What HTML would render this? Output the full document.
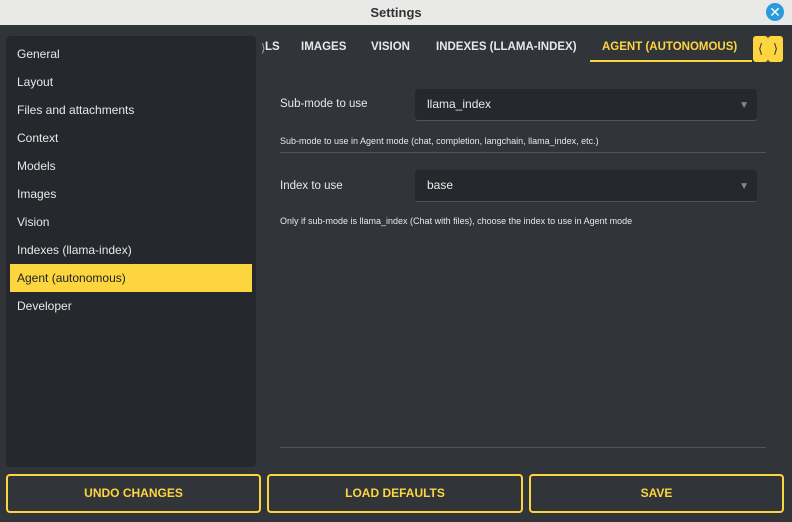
<!DOCTYPE html>
<html><head><style>
*{margin:0;padding:0;box-sizing:border-box}
body{width:792px;height:522px;background:#31353a;font-family:"Liberation Sans",sans-serif;position:relative;overflow:hidden;color:#e8e8e8}
.title{position:absolute;left:0;top:0;width:792px;height:25px;background:#e9e9e8;text-align:center;font-weight:bold;font-size:13px;line-height:25px;color:#333}
.close{position:absolute;right:8px;top:3px;width:18px;height:18px;border-radius:50%;background:#2a9bdc;color:#fff;font-size:14px;line-height:18px;text-align:center}
.left{position:absolute;left:6px;top:36px;width:250px;height:431px;background:#25282c;border-radius:4px}
.item{position:absolute;left:4px;width:242px;height:28px;font-size:12px;line-height:28px;padding-left:7px;color:#e8e8e8}
.sel{background:#fdd53f;color:#222}
.tab{position:absolute;top:41px;font-size:11.5px;font-weight:bold;color:#e8e8e8}
.lbl{position:absolute;font-size:11.5px;color:#e8e8e8}
.combo{position:absolute;left:415px;width:342px;height:32px;background:#25282c;border-radius:3px;border-bottom:1px solid #555;font-size:12px;line-height:30px;padding-left:12px}
.combo span{position:absolute;right:8px;top:2px;color:#888;font-size:10px}
.small{position:absolute;left:280px;font-size:9px;color:#e8e8e8}
.hr{position:absolute;left:280px;width:486px;height:1px;background:#50555a}
.btn{position:absolute;top:474px;height:39px;border:2px solid #fdd53f;border-radius:4px;color:#fdd53f;font-weight:bold;font-size:12px;text-align:center;line-height:35px}
</style></head><body>
<div class="title">Settings</div><div class="close">✕</div>
<div class="left">
<div class="item" style="top:4px">General</div>
<div class="item" style="top:32px">Layout</div>
<div class="item" style="top:60px">Files and attachments</div>
<div class="item" style="top:88px">Context</div>
<div class="item" style="top:116px">Models</div>
<div class="item" style="top:144px">Images</div>
<div class="item" style="top:172px">Vision</div>
<div class="item" style="top:200px">Indexes (llama-index)</div>
<div class="item sel" style="top:228px">Agent (autonomous)</div>
<div class="item" style="top:256px">Developer</div>
</div>
<div class="tab" style="left:261px;color:#aaa;font-weight:normal">⟩</div>
<div class="tab" style="left:265px">LS</div>
<div class="tab" style="left:301px">IMAGES</div>
<div class="tab" style="left:371px">VISION</div>
<div class="tab" style="left:436px">INDEXES (LLAMA-INDEX)</div>
<div class="tab" style="left:602px;color:#fdd53f">AGENT (AUTONOMOUS)</div>
<div style="position:absolute;left:590px;top:60px;width:162px;height:2px;background:#fdd53f"></div>
<div style="position:absolute;left:753px;top:36px;width:15px;height:26px;background:#fdd53f;border-radius:3px;color:#333;text-align:center;line-height:26px;font-size:13px">⟨</div>
<div style="position:absolute;left:768px;top:36px;width:15px;height:26px;background:#fdd53f;border-radius:3px;color:#333;text-align:center;line-height:26px;font-size:13px">⟩</div>
<div class="lbl" style="left:280px;top:98px">Sub-mode to use</div>
<div class="combo" style="top:89px">llama_index<span>▼</span></div>
<div class="small" style="top:136px">Sub-mode to use in Agent mode (chat, completion, langchain, llama_index, etc.)</div>
<div class="hr" style="top:152px"></div>
<div class="lbl" style="left:280px;top:180px">Index to use</div>
<div class="combo" style="top:170px">base<span>▼</span></div>
<div class="small" style="top:216px">Only if sub-mode is llama_index (Chat with files), choose the index to use in Agent mode</div>
<div class="hr" style="top:447px"></div>
<div class="btn" style="left:6px;width:255px">UNDO CHANGES</div>
<div class="btn" style="left:267px;width:256px">LOAD DEFAULTS</div>
<div class="btn" style="left:529px;width:255px">SAVE</div>
</body></html>
